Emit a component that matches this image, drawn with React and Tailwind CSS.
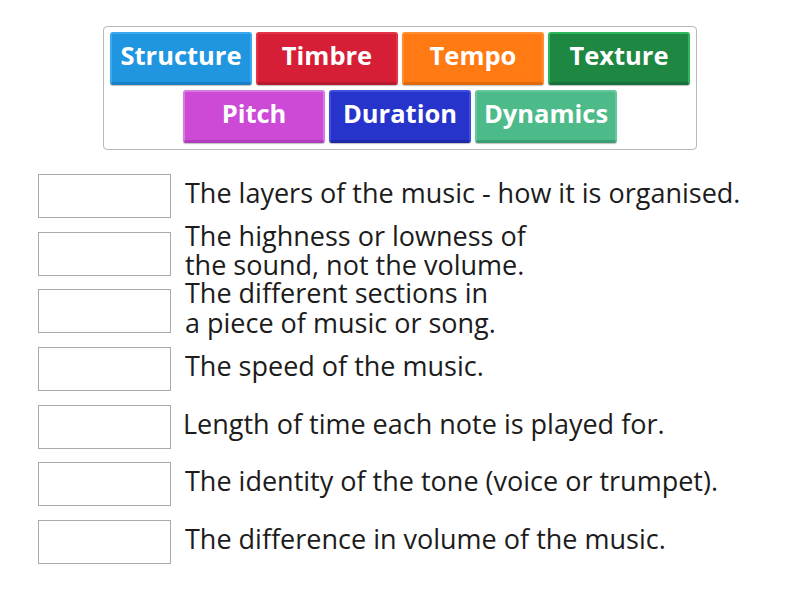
import React from "react";

const tiles = [
  { label: "Structure", cls: "bg-[#2196e0] border-[#3aa9ef] border-b-[#1b7fc4]" },
  { label: "Timbre", cls: "bg-[#d61f36] border-[#e3344a] border-b-[#b81a2e]" },
  { label: "Tempo", cls: "bg-[#ff7a12] border-[#ff8e30] border-b-[#e06a0c]" },
  { label: "Texture", cls: "bg-[#1e8741] border-[#2fb65a] border-b-[#18703a]" },
  { label: "Pitch", cls: "bg-[#cc4ad6] border-[#d67ce0] border-b-[#b03dbb]" },
  { label: "Duration", cls: "bg-[#2634cc] border-[#3e4ee0] border-b-[#1e29a8]" },
  { label: "Dynamics", cls: "bg-[#4cba89] border-[#64c89a] border-b-[#3e9e73]" },
];

const rows = [
  { text: "The layers of the music - how it is organised." },
  { text: ["The highness or lowness of", "the sound, not the volume."] },
  { text: ["The different sections in", "a piece of music or song."] },
  { text: "The speed of the music." },
  { text: "Length of time each note is played for.", shift: true },
  { text: "The identity of the tone (voice or trumpet)." },
  { text: "The difference in volume of the music." },
];

function Tile({ label, cls }) {
  return (
    <div
      className={`w-[142px] h-[53px] rounded-[3px] border-2 border-b-[3px] pb-[5px] flex items-center justify-center text-white font-bold text-[25.5px] shadow-[0_1px_1px_rgba(0,0,0,0.25)] ${cls}`}
    >
      {label}
    </div>
  );
}

export default function App() {
  return (
    <div className="w-[800px] h-[600px] bg-white font-['Open_Sans',sans-serif] text-[#1c1c1c]">
      <div className="pt-[26px]">
        <div className="mx-auto w-[594px] border border-[#b8b8b8] rounded-[4px] px-[6px] pt-[5px] pb-[6px] flex flex-wrap justify-center gap-x-[4px] gap-y-[5px]">
          {tiles.map((t) => (
            <Tile key={t.label} {...t} />
          ))}
        </div>
      </div>

      <div className="mt-[24px] pl-[38px] flex flex-col gap-[13.7px]">
        {rows.map((r, i) => (
          <div key={i} className="flex items-center h-[44px]">
            <div className="w-[133px] h-[44px] border border-[#aaa] bg-white shrink-0" />
            <div
              className={`text-[27px] leading-[29.5px] pb-[7px] ${r.shift ? "ml-[12px]" : "ml-[14px]"}`}
            >
              {Array.isArray(r.text)
                ? r.text.map((l) => <div key={l}>{l}</div>)
                : r.text}
            </div>
          </div>
        ))}
      </div>
    </div>
  );
}
